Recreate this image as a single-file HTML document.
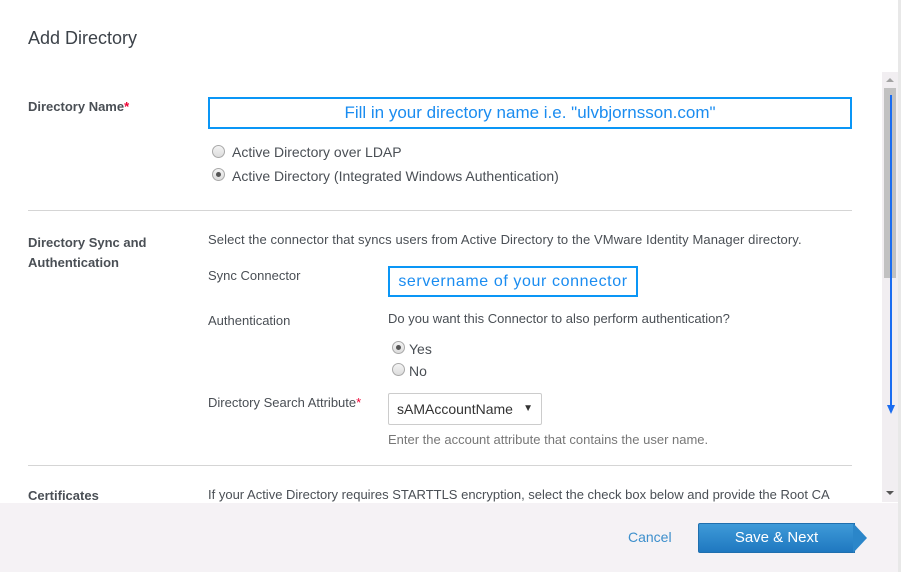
<!DOCTYPE html>
<html><head><style>
body{margin:0;width:901px;height:572px;overflow:hidden;background:#fff;font-family:"Liberation Sans",sans-serif;color:#444;position:relative}
.a{position:absolute;white-space:nowrap}
.lbl{font-weight:bold;font-size:13px;color:#4a4f55}
.t{font-size:13px;color:#4a4f55}
.radio{position:absolute;width:11px;height:11px;border:1px solid #a9a9a9;border-radius:50%;background:linear-gradient(#f4f4f4,#dcdcdc)}
.radio.on::after{content:"";position:absolute;left:3px;top:3px;width:5px;height:5px;border-radius:50%;background:#555}
.hr{position:absolute;left:28px;width:824px;height:1px;background:#d5d5d5}
</style></head><body>
<div class="a" style="left:28px;top:28px;font-size:18px;color:#3c4249">Add Directory</div>

<div class="a lbl" style="left:28px;top:99px">Directory Name<span style="color:#e03">*</span></div>
<div class="a" style="left:208px;top:97px;width:640px;height:28px;border:2px solid #0a96f6;color:#1a8cf0;font-size:17px;text-align:center;line-height:28px">Fill in your directory name i.e. "ulvbjornsson.com"</div>
<div class="radio" style="left:212px;top:145px"></div>
<div class="a" style="left:232px;top:144px;font-size:14px;color:#4a4f55">Active Directory over LDAP</div>
<div class="radio on" style="left:212px;top:168px"></div>
<div class="a" style="left:232px;top:168px;font-size:14px;color:#4a4f55">Active Directory (Integrated Windows Authentication)</div>

<div class="hr" style="top:210px"></div>
<div class="a lbl" style="left:28px;top:233px;line-height:20px">Directory Sync and<br>Authentication</div>
<div class="a t" style="left:208px;top:232px;letter-spacing:0.1px">Select the connector that syncs users from Active Directory to the VMware Identity Manager directory.</div>
<div class="a t" style="left:208px;top:268px">Sync Connector</div>
<div class="a" style="left:388px;top:266px;width:246px;height:27px;border:2px solid #0a96f6;color:#1a8cf0;font-size:16px;letter-spacing:0.6px;text-align:center;line-height:28px">servername of your connector</div>
<div class="a t" style="left:208px;top:313px">Authentication</div>
<div class="a t" style="left:388px;top:311px">Do you want this Connector to also perform authentication?</div>
<div class="radio on" style="left:392px;top:341px"></div>
<div class="a" style="left:409px;top:341px;font-size:14px;color:#4a4f55">Yes</div>
<div class="radio" style="left:392px;top:363px"></div>
<div class="a" style="left:409px;top:363px;font-size:14px;color:#4a4f55">No</div>
<div class="a t" style="left:208px;top:395px">Directory Search Attribute<span style="color:#e03">*</span></div>
<div class="a" style="left:388px;top:393px;width:152px;height:30px;border:1px solid #ccc;border-radius:2px;font-size:14px;color:#333;line-height:30px"><span style="margin-left:8px">sAMAccountName</span><span style="position:absolute;right:8px;font-size:10px">▼</span></div>
<div class="a t" style="left:388px;top:432px;color:#777">Enter the account attribute that contains the user name.</div>

<div class="hr" style="top:465px"></div>
<div class="a lbl" style="left:28px;top:488px">Certificates</div>
<div class="a t" style="left:208px;top:487px">If your Active Directory requires STARTTLS encryption, select the check box below and provide the Root CA</div>

<!-- scrollbar -->
<div class="a" style="left:882px;top:72px;width:16px;height:430px;background:#f1eef1"></div>
<div class="a" style="left:884px;top:88px;width:12px;height:190px;background:#c1c1c1"></div>
<div class="a" style="left:886px;top:78px;width:0;height:0;border-left:4px solid transparent;border-right:4px solid transparent;border-bottom:4px solid #a3a3a3"></div>
<div class="a" style="left:886px;top:491px;width:0;height:0;border-left:4px solid transparent;border-right:4px solid transparent;border-top:4px solid #555"></div>
<div class="a" style="left:890px;top:95px;width:2px;height:312px;background:#1a6cf0"></div>
<div class="a" style="left:887px;top:405px;width:0;height:0;border-left:4px solid transparent;border-right:4px solid transparent;border-top:9px solid #1a6cf0"></div>
<div class="a" style="left:898px;top:0;width:3px;height:572px;background:#e8e8e8"></div>

<!-- footer -->
<div class="a" style="left:0;top:503px;width:898px;height:69px;background:#f5f2f5"></div>
<div class="a" style="left:628px;top:529px;font-size:14px;color:#3d8fcc">Cancel</div>
<div class="a" style="left:698px;top:523px;width:155px;height:28px;background:linear-gradient(#3e9ad8,#1f78c0);border:1px solid #1f6fae;border-radius:2px 0 0 2px;color:#fff;font-size:15px;line-height:28px;text-align:center">Save &amp; Next</div>
<div class="a" style="left:853px;top:523px;width:0;height:0;border-top:15px solid transparent;border-bottom:15px solid transparent;border-left:14px solid #2b86c9"></div>
</body></html>
